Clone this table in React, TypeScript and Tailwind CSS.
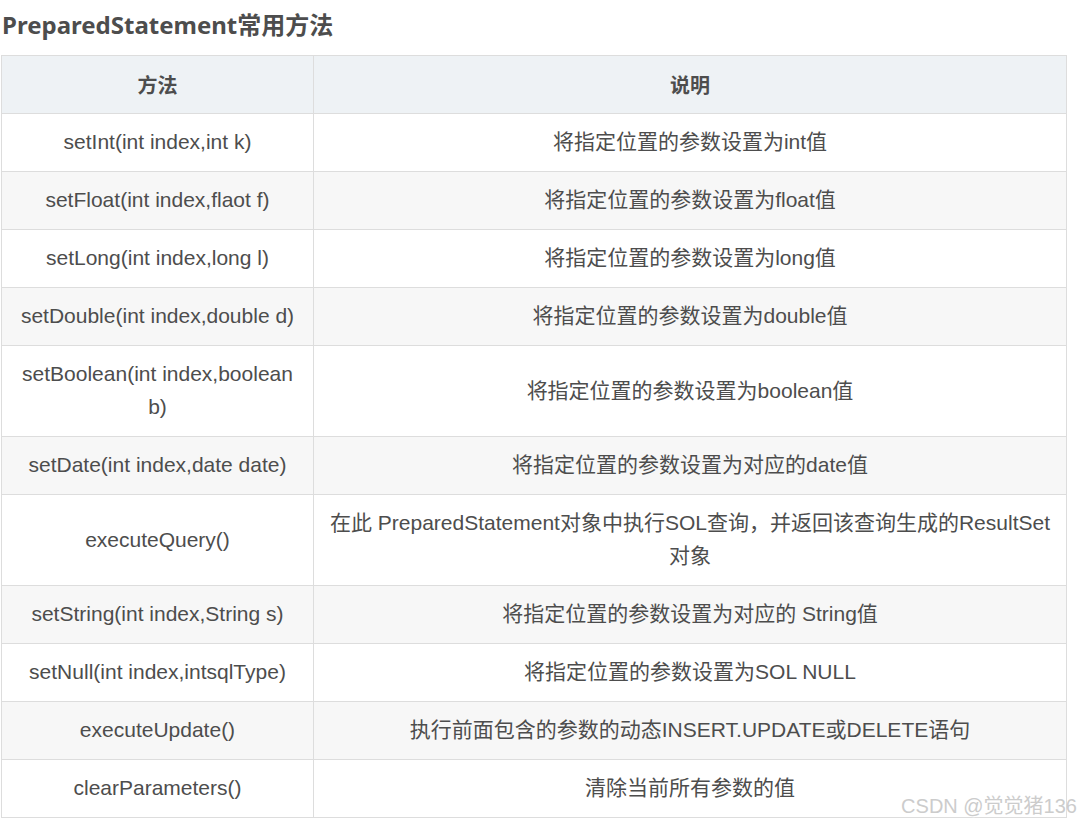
const rows: { method: string; desc: string }[] = [
    { method: "setInt(int index,int k)", desc: "将指定位置的参数设置为int值" },
    { method: "setFloat(int index,flaot f)", desc: "将指定位置的参数设置为float值" },
    { method: "setLong(int index,long l)", desc: "将指定位置的参数设置为long值" },
    { method: "setDouble(int index,double d)", desc: "将指定位置的参数设置为double值" },
    { method: "setBoolean(int index,boolean b)", desc: "将指定位置的参数设置为boolean值" },
    { method: "setDate(int index,date date)", desc: "将指定位置的参数设置为对应的date值" },
    {
        method: "executeQuery()",
        desc: "在此 PreparedStatement对象中执行SOL查询，并返回该查询生成的ResultSet对象",
    },
    { method: "setString(int index,String s)", desc: "将指定位置的参数设置为对应的 String值" },
    { method: "setNull(int index,intsqlType)", desc: "将指定位置的参数设置为SOL NULL" },
    { method: "executeUpdate()", desc: "执行前面包含的参数的动态INSERT.UPDATE或DELETE语句" },
    { method: "clearParameters()", desc: "清除当前所有参数的值" },
];

export default function App() {
    return (
        <div className="relative h-[822px] w-[1081px] overflow-hidden bg-white font-['Liberation_Sans','Noto_Sans_CJK_SC',sans-serif] text-[#4d4d4d]">
            <h3 className="pl-[2px] pt-[8px] text-[24px] font-bold leading-[34px] font-['Noto_Sans','Noto_Sans_CJK_SC',sans-serif]">
                PreparedStatement常用方法
            </h3>

            <table className="ml-[1px] mt-[13px] w-[1066px] table-fixed border-collapse text-[21px] leading-[33px]">
                <thead>
                    <tr className="bg-[#eef2f5]">
                        <th className="w-[312px] border border-[#dddddd] px-[12px] pt-[12px] pb-[12px] text-[20px] font-bold font-['Noto_Sans_CJK_SC',sans-serif]">
                            方法
                        </th>
                        <th className="border border-[#dddddd] px-[12px] pt-[12px] pb-[12px] text-[20px] font-bold font-['Noto_Sans_CJK_SC',sans-serif]">
                            说明
                        </th>
                    </tr>
                </thead>
                <tbody>
                    {rows.map((row, i) => (
                        <tr key={row.method} className={i % 2 === 1 ? "bg-[#f7f7f7]" : "bg-white"}>
                            <td className="border border-[#dddddd] px-[12px] pt-[11px] pb-[13px] text-center">
                                {row.method}
                            </td>
                            <td className="border border-[#dddddd] px-[12px] pt-[11px] pb-[13px] text-center">
                                {row.desc}
                            </td>
                        </tr>
                    ))}
                </tbody>
            </table>

            <div className="absolute bottom-[4px] right-[4px] text-[20px] leading-[24px] text-[#cccccc] [text-shadow:1px_1px_0_#ffffff]">
                CSDN @觉觉猪136
            </div>
        </div>
    );
}
